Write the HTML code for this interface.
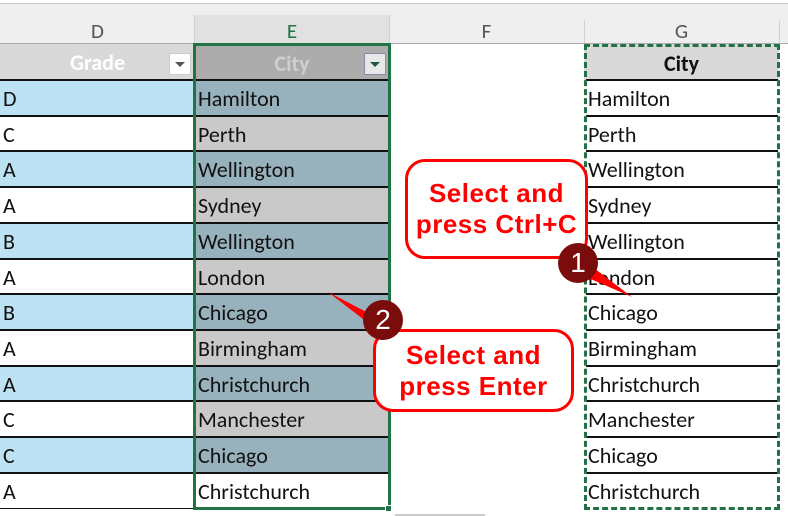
<!DOCTYPE html>
<html><head><style>
*{margin:0;padding:0;box-sizing:border-box}
body{width:788px;height:516px;overflow:hidden;background:#fff;position:relative;font-family:Calibri,"Carlito","Liberation Sans",sans-serif}
.a{position:absolute}
.t{position:absolute;font-size:22px;color:#111;line-height:36px;padding-left:3px;white-space:nowrap}
.hl{position:absolute;height:2px;background:#111}
.call{position:absolute;border:3px solid #f00;border-radius:20px;background:#fff;color:#f00;font-weight:bold;font-family:"Liberation Sans",Arial,sans-serif;font-size:26px;line-height:31px;text-align:center;white-space:nowrap;letter-spacing:0.5px}
.circ{position:absolute;width:40px;height:40px;border-radius:50%;background:#7b0c0c;color:#fff;font-family:"Liberation Sans",sans-serif;font-size:28px;line-height:40px;text-align:center}
</style></head><body>
<div class="a" style="left:0;top:3px;width:788px;height:1px;background:#c8c8c8"></div>
<div class="a" style="left:0;top:4px;width:788px;height:39px;background:#efefef"></div>
<div class="a" style="left:195px;top:15px;width:194px;height:28px;background:#e1e1e1"></div>
<div class="a" style="left:0;top:43px;width:788px;height:1px;background:#aaa"></div>
<div class="a" style="left:194px;top:15px;width:1px;height:28px;background:#d0d0d0"></div>
<div class="a" style="left:389px;top:15px;width:1px;height:28px;background:#d0d0d0"></div>
<div class="a" style="left:584px;top:20px;width:1px;height:23px;background:#d0d0d0"></div>
<div class="a" style="left:779px;top:20px;width:1px;height:23px;background:#d0d0d0"></div>
<div class="a" style="left:0;top:18px;width:195px;text-align:center;font-size:21px;color:#555">D</div>
<div class="a" style="left:195px;top:18px;width:194px;text-align:center;font-size:21px;color:#217346">E</div>
<div class="a" style="left:389px;top:18px;width:195px;text-align:center;font-size:21px;color:#555">F</div>
<div class="a" style="left:584px;top:18px;width:195px;text-align:center;font-size:21px;color:#555">G</div>
<div class="a" style="left:0;top:44px;width:195px;height:36px;background:#d9d9d9"></div>
<div class="a" style="left:195px;top:44px;width:194px;height:36px;background:#acacac"></div>
<div class="a" style="left:584px;top:44px;width:195px;height:36px;background:#d9d9d9"></div>
<div class="a" style="left:0;top:44px;width:195px;text-align:center;font-size:22px;line-height:38px;font-weight:bold;color:#fff">Grade</div>
<div class="a" style="left:195px;top:44px;width:194px;text-align:center;font-size:22px;line-height:40px;font-weight:bold;color:#cfcfcf">City</div>
<div class="a" style="left:584px;top:44px;width:195px;text-align:center;font-size:22px;line-height:40px;font-weight:bold;color:#111">City</div>
<div class="a" style="left:169px;top:53px;width:22px;height:22px;background:#fff;border:1px solid #ccc"><div style="margin:8px auto 0;width:0;height:0;border-left:5px solid transparent;border-right:5px solid transparent;border-top:5px solid #555"></div></div>
<div class="a" style="left:364px;top:53px;width:22px;height:22px;background:#e8e8e8;border:1px solid #8a8aa8"><div style="margin:8px auto 0;width:0;height:0;border-left:5px solid transparent;border-right:5px solid transparent;border-top:5px solid #254"></div></div>
<div id="rows"></div>
<script>
var g=["D","C","A","A","B","A","B","A","A","C","C","A"];
var c=["Hamilton","Perth","Wellington","Sydney","Wellington","London","Chicago","Birmingham","Christchurch","Manchester","Chicago","Christchurch"];
var h="";
for(var i=0;i<12;i++){
 var y=80+i*35.7;
 var db=(i%2==0&&i<11)?"#bde2f3":"#fff";
 var eb=i==11?"#fff":(i%2==0?"#98b2bd":"#c9c9c9");
 h+='<div class="a" style="left:0;top:'+y+'px;width:195px;height:36px;background:'+db+'"></div>';
 h+='<div class="a" style="left:195px;top:'+y+'px;width:194px;height:36px;background:'+eb+'"></div>';
 h+='<div class="t" style="left:0;top:'+(y+1)+'px">'+g[i]+'</div>';
 h+='<div class="t" style="left:195px;top:'+(y+1)+'px">'+c[i]+'</div>';
 h+='<div class="t" style="left:585px;top:'+(y+1)+'px">'+c[i]+'</div>';
 h+='<div class="hl" style="left:0;top:'+(y-1)+'px;width:389px"></div>';
 h+='<div class="hl" style="left:586px;top:'+(y-1)+'px;width:192px"></div>';
}
h+='<div class="hl" style="left:0;top:508px;width:195px;height:1px"></div>';
document.getElementById("rows").innerHTML=h;
</script>
<div class="a" style="left:193px;top:43px;width:198px;height:467px;border:3px solid #217346"></div>
<div class="a" style="left:385px;top:505px;width:7px;height:7px;background:#217346;border:1px solid #fff"></div>
<div class="a" style="left:395px;top:514px;width:90px;height:2px;background:#ccc"></div>
<div class="a" style="left:584px;top:44px;width:196px;height:466px;border:3px dashed #217346"></div>
<svg class="a" style="left:0;top:0" width="788" height="516">
<polygon points="570,270 632,297 586,262" fill="#f00"/>
<polygon points="328,292 378,318 372,326" fill="#f00"/>
</svg>
<div class="call" style="left:405px;top:159px;width:183px;height:100px;padding-top:16px">Select and<br>press Ctrl+C</div>
<div class="call" style="left:373px;top:329px;width:201px;height:83px;padding-top:8px">Select and<br>press Enter</div>
<div class="circ" style="left:558px;top:243px">1</div>
<div class="circ" style="left:363px;top:300px">2</div>
</body></html>
